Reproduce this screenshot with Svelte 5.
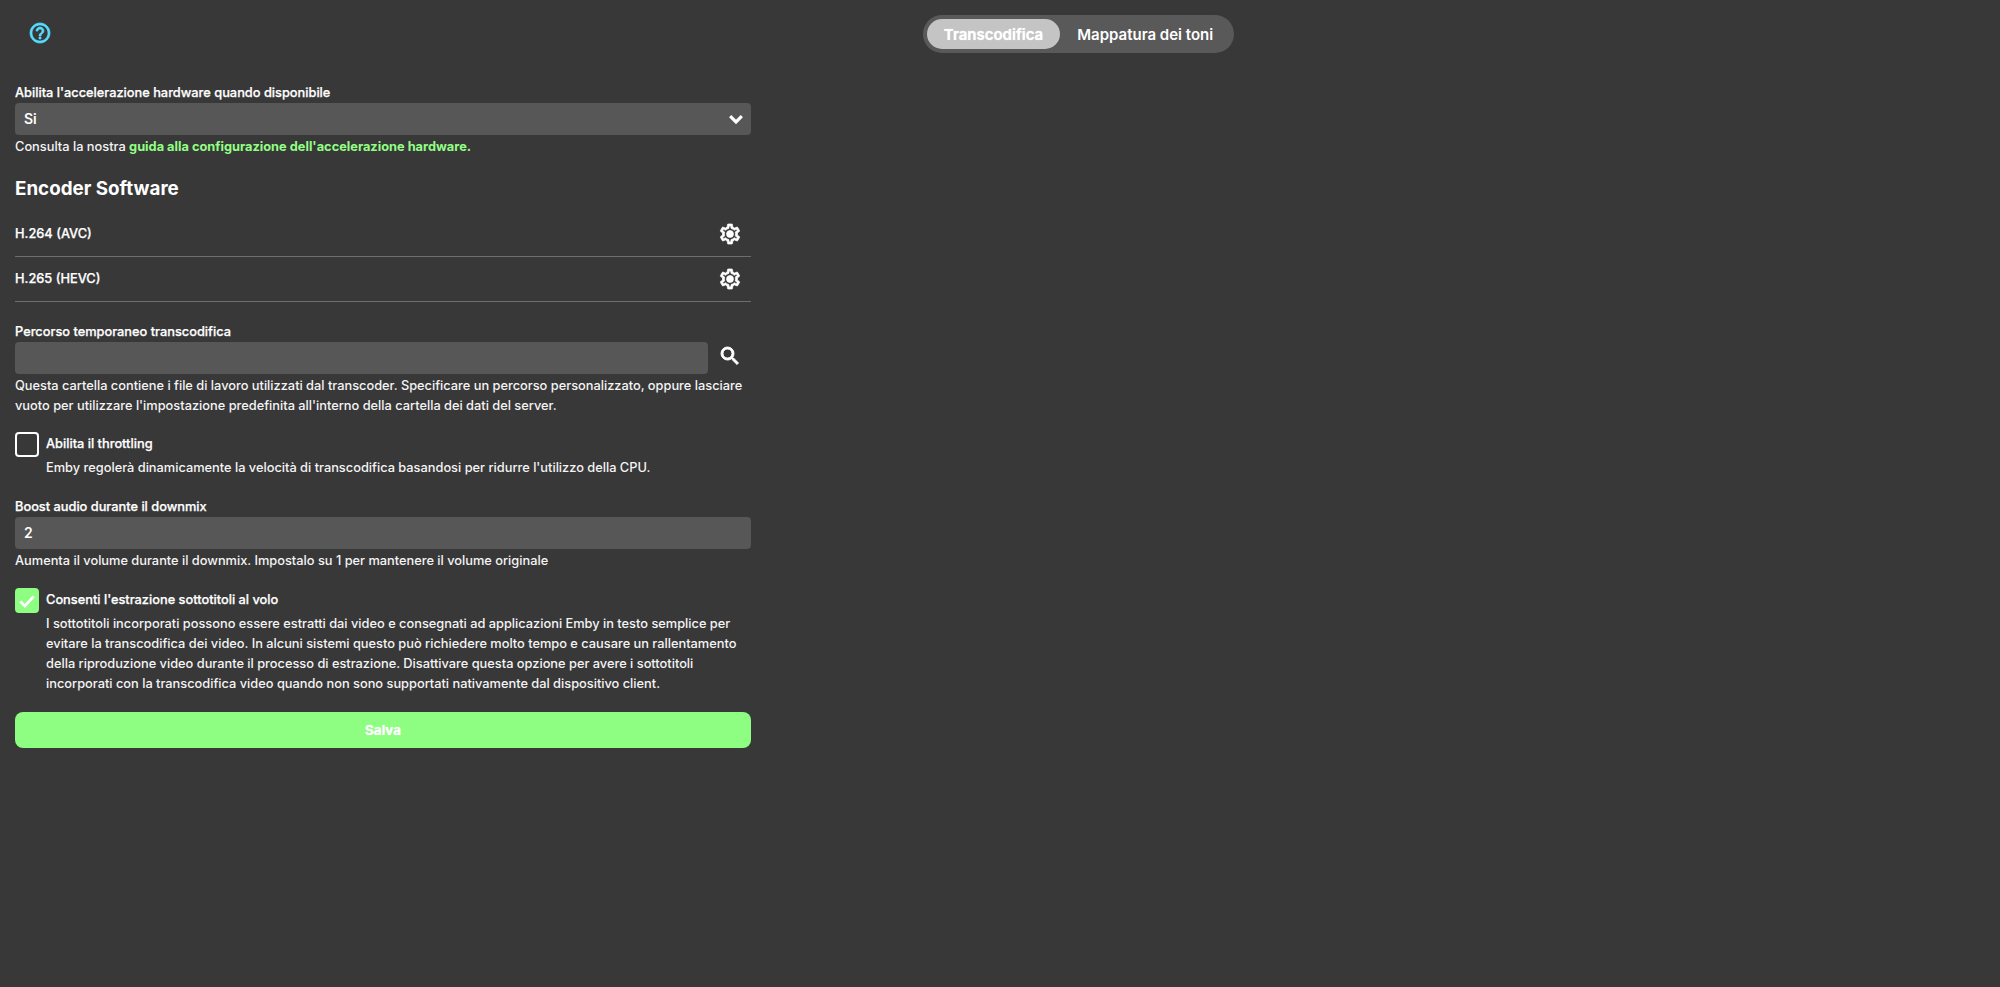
<script>
  const tabs = [
    { label: "Transcodifica", active: true },
    { label: "Mappatura dei toni", active: false }
  ];
  const encoders = ["H.264 (AVC)", "H.265 (HEVC)"];
</script>

<main class="page">
  <header class="top">
    <svg class="help" viewBox="0 0 24 24" width="24" height="24" fill="#55dcff" stroke="#55dcff" stroke-width="0.7">
      <path d="M11 18h2v-2h-2v2zm1-16C6.48 2 2 6.48 2 12s4.48 10 10 10 10-4.48 10-10S17.52 2 12 2zm0 18c-4.41 0-8-3.59-8-8s3.59-8 8-8 8 3.59 8 8-3.59 8-8 8zm0-14c-2.21 0-4 1.79-4 4h2c0-1.1.9-2 2-2s2 .9 2 2c0 2-3 1.75-3 5h2c0-2.25 3-2.5 3-5 0-2.21-1.79-4-4-4z"/>
    </svg>
    <nav class="tabs">
      {#each tabs as tab}
        <button class="tab" class:active={tab.active}>{tab.label}</button>
      {/each}
    </nav>
  </header>

  <form class="form">
    <div class="field first">
      <div class="label">Abilita l'accelerazione hardware quando disponibile</div>
      <div class="box select">
        <span>Si</span>
        <svg viewBox="0 0 24 24" width="20" height="20" fill="none" stroke="#fff" stroke-width="3.8">
          <path d="M5 8.5l7 7 7-7"/>
        </svg>
      </div>
      <div class="help-text">Consulta la nostra <a href="#guide">guida alla configurazione dell'accelerazione hardware.</a></div>
    </div>

    <h2>Encoder Software</h2>
    <div class="list">
      {#each encoders as enc}
        <div class="row">
          <span>{enc}</span>
          <svg viewBox="0 0 24 24" width="24" height="24" fill="#fff" stroke="#fff" stroke-width="0.7">
            <path fill-rule="evenodd" d="M19.4 13c.04-.33.06-.66.06-1s-.02-.67-.06-1l2.1-1.63c.2-.15.25-.42.13-.64l-2-3.46c-.12-.22-.39-.3-.61-.22l-2.49 1c-.52-.4-1.08-.73-1.69-.98l-.38-2.65A.49.49 0 0 0 14 2h-4c-.25 0-.46.18-.49.42l-.38 2.65c-.61.25-1.17.59-1.69.98l-2.49-1c-.23-.09-.49 0-.61.22l-2 3.46c-.13.22-.07.49.12.64L4.57 11c-.04.33-.07.66-.07 1s.03.67.07 1l-2.11 1.63c-.19.15-.25.42-.12.64l2 3.46c.12.22.39.3.61.22l2.49-1c.52.4 1.08.73 1.69.98l.38 2.65c.03.24.24.42.49.42h4c.25 0 .46-.18.49-.42l.38-2.65c.61-.25 1.17-.59 1.69-.98l2.49 1c.23.09.49 0 .61-.22l2-3.46c.12-.22.07-.49-.12-.64L19.4 13zM17.4 11.2c.04.31.05.52.05.8s-.02.49-.05.8l-.14 1.13.89.7 1.08.84-.7 1.21-1.27-.51-1.04-.42-.9.68c-.43.32-.84.56-1.25.73l-1.06.43-.16 1.13-.2 1.35h-1.4l-.19-1.35-.16-1.13-1.06-.43c-.43-.18-.83-.41-1.23-.71l-.91-.7-1.06.43-1.27.51-.7-1.21 1.08-.84.89-.7-.14-1.13c-.03-.31-.05-.54-.05-.81s.02-.5.05-.8l.14-1.13-.89-.7-1.08-.84.7-1.21 1.27.51 1.04.42.9-.68c.43-.32.84-.56 1.25-.73l1.06-.43.16-1.13.2-1.35h1.39l.19 1.35.16 1.13 1.06.43c.43.18.83.41 1.23.71l.91.7 1.06-.43 1.27-.51.7 1.21-1.07.85-.89.7.14 1.13zM12 8.5a3.5 3.5 0 1 0 0 7 3.5 3.5 0 0 0 0-7z"/>
          </svg>
        </div>
      {/each}
    </div>

    <div class="field path">
      <div class="label">Percorso temporaneo transcodifica</div>
      <div class="path-row">
        <div class="box grow"></div>
        <svg viewBox="0 0 24 24" width="24" height="24" fill="#fff" stroke="#fff" stroke-width="1">
          <path d="M15.5 14h-.79l-.28-.27A6.47 6.47 0 0 0 16 9.5 6.5 6.5 0 1 0 9.5 16c1.61 0 3.09-.59 4.23-1.57l.27.28v.79l5 4.99L20.49 19l-4.99-5zm-6 0C7.01 14 5 11.99 5 9.5S7.01 5 9.5 5 14 7.01 14 9.5 11.99 14 9.5 14z"/>
        </svg>
      </div>
      <div class="help-text">Questa cartella contiene i file di lavoro utilizzati dal transcoder. Specificare un percorso personalizzato, oppure lasciare vuoto per utilizzare l'impostazione predefinita all'interno della cartella dei dati del server.</div>
    </div>

    <div class="check throttle">
      <span class="tick"></span>
      <div>
        <div class="label">Abilita il throttling</div>
        <div class="help-text">Emby regolerà dinamicamente la velocità di transcodifica basandosi per ridurre l'utilizzo della CPU.</div>
      </div>
    </div>

    <div class="field boost">
      <div class="label">Boost audio durante il downmix</div>
      <div class="box"><span>2</span></div>
      <div class="help-text">Aumenta il volume durante il downmix. Impostalo su 1 per mantenere il volume originale</div>
    </div>

    <div class="check subs">
      <span class="tick on">
        <svg viewBox="0 0 24 24" width="22" height="22" fill="none" stroke="#fff" stroke-width="3.4">
          <path d="M4 12.5l5.5 5.5L20 6.5"/>
        </svg>
      </span>
      <div>
        <div class="label">Consenti l'estrazione sottotitoli al volo</div>
        <div class="help-text">I sottotitoli incorporati possono essere estratti dai video e consegnati ad applicazioni Emby in testo semplice per evitare la transcodifica dei video. In alcuni sistemi questo può richiedere molto tempo e causare un rallentamento della riproduzione video durante il processo di estrazione. Disattivare questa opzione per avere i sottotitoli incorporati con la transcodifica video quando non sono supportati nativamente dal dispositivo client.</div>
      </div>
    </div>

    <button class="save" type="button">Salva</button>
  </form>
</main>

<style>
  :global(body) {
    background: #383838;
  }
  .page {
    min-height: 987px;
    background: #383838;
    color: #fff;
    font-family: Inter, "Liberation Sans", sans-serif;
    font-size: 12.8px;
    line-height: 20px;
  }
  .top {
    height: 52px;
    padding-top: 15px;
    display: flex;
    justify-content: center;
    position: relative;
  }
  .help {
    position: absolute;
    left: 28px;
    top: 21px;
  }
  .tabs {
    display: flex;
    height: 38px;
    padding: 4px;
    box-sizing: border-box;
    border-radius: 19px;
    background: #595959;
    margin-left: 157px;
  }
  .tab {
    border: none;
    background: none;
    color: #fff;
    font: 600 15px Inter, "Liberation Sans", sans-serif;
    padding: 0 17px;
    border-radius: 15px;
  }
  .tab.active {
    background: #c4c4c4;
    padding: 0 17px;
    text-shadow: 0 0 1px #fff;
  }
  .form {
    width: 736px;
    margin-left: 15px;
    padding-top: 16px;
  }
  .label {
    font-weight: 500;
    height: 20px;
    -webkit-text-stroke: 0.25px #fff;
  }
  .box {
    height: 32px;
    background: #575757;
    border-radius: 4px;
    padding: 0 9px;
    box-sizing: border-box;
    display: flex;
    align-items: center;
    justify-content: space-between;
    font-size: 14px;
    font-weight: 600;
  }
  .select svg {
    margin-right: -4px;
  }
  .help-text {
    color: #f4f4f4;
    margin-top: 2px;
    font-weight: 500;
  }
  .help-text a {
    color: #92fe84;
    font-weight: 700;
    text-decoration: none;
  }
  h2 {
    margin: 20px 0 0;
    font-size: 18.8px;
    font-weight: 700;
    line-height: 24px;
  }
  .list {
    margin-top: 11px;
  }
  .row {
    height: 45px;
    border-bottom: 1px solid #6e6e6e;
    box-sizing: border-box;
    display: flex;
    align-items: center;
    justify-content: space-between;
    padding-right: 9px;
    font-weight: 500;
    -webkit-text-stroke: 0.25px #fff;
  }
  .row svg {
    margin-top: -1px;
  }
  .path {
    margin-top: 20px;
  }
  .path-row {
    display: flex;
    align-items: center;
    gap: 10px;
    padding-right: 9px;
  }
  .path-row svg {
    margin-top: -5px;
  }
  .grow {
    flex: 1;
  }
  .check {
    display: flex;
    gap: 7px;
  }
  .throttle {
    margin-top: 16px;
  }
  .subs {
    margin-top: 17px;
  }
  .tick {
    width: 24px;
    height: 25px;
    box-sizing: border-box;
    flex: none;
    border: 2px solid #fff;
    border-radius: 4px;
    display: flex;
    align-items: center;
    justify-content: center;
  }
  .tick.on {
    background: #8dfe81;
    border-color: #8dfe81;
  }
  .check .label {
    padding-top: 2px;
  }
  .check .help-text {
    margin-top: 4px;
  }
  .boost {
    margin-top: 19px;
  }
  .save {
    display: block;
    width: 100%;
    height: 36px;
    margin-top: 18px;
    border: none;
    border-radius: 8px;
    background: #8dfe81;
    color: #fff;
    font: 600 13.6px Inter, "Liberation Sans", sans-serif;
    text-shadow: 0 0 1px #fff;
  }
</style>
